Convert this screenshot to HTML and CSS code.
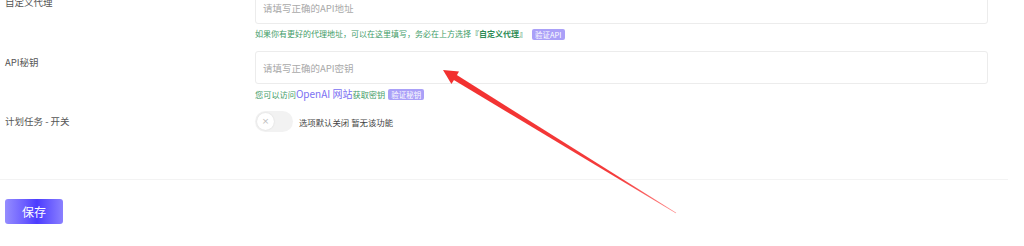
FILE: index.html
```html
<!DOCTYPE html>
<html lang="zh-CN">
<head>
<meta charset="utf-8">
<title>设置</title>
<link rel="stylesheet" href="styles.css">
</head>
<body>
<div class="page">
  <div class="form">
    <div class="row row-first">
      <div class="label">自定义代理</div>
      <div class="field">
        <div class="input"><span class="placeholder">请填写正确的API地址</span></div>
        <div class="help">如果你有更好的代理地址，可以在这里填写，务必在上方选择<b class="strong">『自定义代理』</b><span class="badge">验证API</span></div>
      </div>
    </div>
    <div class="row">
      <div class="label">API秘钥</div>
      <div class="field">
        <div class="input"><span class="placeholder">请填写正确的API密钥</span></div>
        <div class="help help-2">您可以访问<span class="link">OpenAI 网站</span>获取密钥<span class="badge">验证秘钥</span></div>
      </div>
    </div>
    <div class="row row-center">
      <div class="label">计划任务 - 开关</div>
      <div class="field field-inline">
        <span class="switch"><span class="knob">×</span></span>
        <span class="switch-text">选项默认关闭 暂无该功能</span>
      </div>
    </div>
  </div>
  <div class="divider"></div>
  <div class="actions">
    <button class="btn-save" type="button">保存</button>
  </div>
  <svg class="arrow" width="1024" height="246" viewBox="0 0 1024 246" xmlns="http://www.w3.org/2000/svg">
    <defs>
      <linearGradient id="ag" x1="676" y1="222" x2="445" y2="80" gradientUnits="userSpaceOnUse">
        <stop offset="0" stop-color="#ff8a8a"/>
        <stop offset="0.25" stop-color="#f43c3c"/>
        <stop offset="1" stop-color="#f2302f"/>
      </linearGradient>
    </defs>
    <polygon points="676.2,221.8 675.8,222.2 453.4,88.8 456.4,83.8" fill="url(#ag)"/>
    <polygon points="443,79 459,80.6 455.6,86.4 451.4,93" fill="#f2302f"/>
  </svg>
</div>
</body>
</html>
```
FILE: styles.css
```css
html, body {
  margin: 0;
  padding: 0;
  background: #ffffff;
  overflow: hidden;
}
body {
  font-family: "Noto Sans CJK SC", "Noto Sans", "Liberation Sans", sans-serif;
  color: #555555;
  width: 1024px;
  height: 246px;
}
.page {
  position: relative;
  width: 1024px;
  height: 246px;
}
.form {
  padding-left: 5px;
  margin-top: -9px;
}
.row {
  display: grid;
  grid-template-columns: 250px 733px;
  margin-bottom: 9px;
}
.row-center {
  align-items: center;
  margin-top: 1px;
}
.label {
  font-size: 9.5px;
  line-height: 22px;
  color: #555555;
  white-space: pre;
}
.row-center .label {
  line-height: 21px;
}
.field {
  display: flex;
  flex-direction: column;
}
.field-inline {
  flex-direction: row;
  align-items: center;
}
.input {
  height: 31px;
  border: 1px solid #ececec;
  border-radius: 3px;
  display: flex;
  align-items: center;
  padding-left: 7px;
  box-sizing: content-box;
  width: 724px;
}
.placeholder {
  font-size: 9.5px;
  color: #a9a9a9;
}
.help {
  margin-top: 2px;
  height: 16px;
  font-size: 8px;
  line-height: 16px;
  color: #3f9c68;
  display: flex;
  align-items: center;
  white-space: nowrap;
}
.help-2 {
  font-size: 8.2px;
}
.strong {
  font-weight: 700;
  color: #2f8d58;
}
.link {
  color: #7a6ff2;
  font-size: 10px;
}
.badge {
  display: inline-block;
  margin-left: 5px;
  padding: 0 3px;
  height: 11px;
  line-height: 11px;
  font-size: 7.5px;
  color: #ffffff;
  background: #aaa0f8;
  border-radius: 2px;
}
.help-2 .badge {
  margin-left: 3px;
}
.switch {
  width: 38px;
  height: 21px;
  border-radius: 11px;
  background: #f2f2f2;
  display: flex;
  align-items: center;
  padding-left: 2px;
  box-sizing: border-box;
}
.knob {
  width: 17px;
  height: 17px;
  border-radius: 50%;
  background: #ffffff;
  box-shadow: 0 0 2px rgba(0, 0, 0, 0.12);
  color: #bdbdbd;
  font-size: 9px;
  line-height: 17px;
  text-align: center;
  font-family: "DejaVu Sans", sans-serif;
}
.switch-text {
  margin-left: 6px;
  font-size: 8.4px;
  color: #444444;
}
.divider {
  width: 1008px;
  height: 1px;
  background: #f3f3f3;
  margin-top: 47px;
}
.actions {
  padding: 18px 0 0 5px;
}
.btn-save {
  width: 58px;
  height: 25px;
  border: none;
  border-radius: 3px;
  background: linear-gradient(90deg, #958dfe 0%, #6a5cff 35%, #4c3cff 55%, #8a80ff 100%);
  color: #ffffff;
  font-family: "Noto Sans CJK SC", sans-serif;
  font-size: 12px;
  padding: 0;
  line-height: 25px;
}
.arrow {
  position: absolute;
  left: 0;
  top: 0;
  pointer-events: none;
}
```
